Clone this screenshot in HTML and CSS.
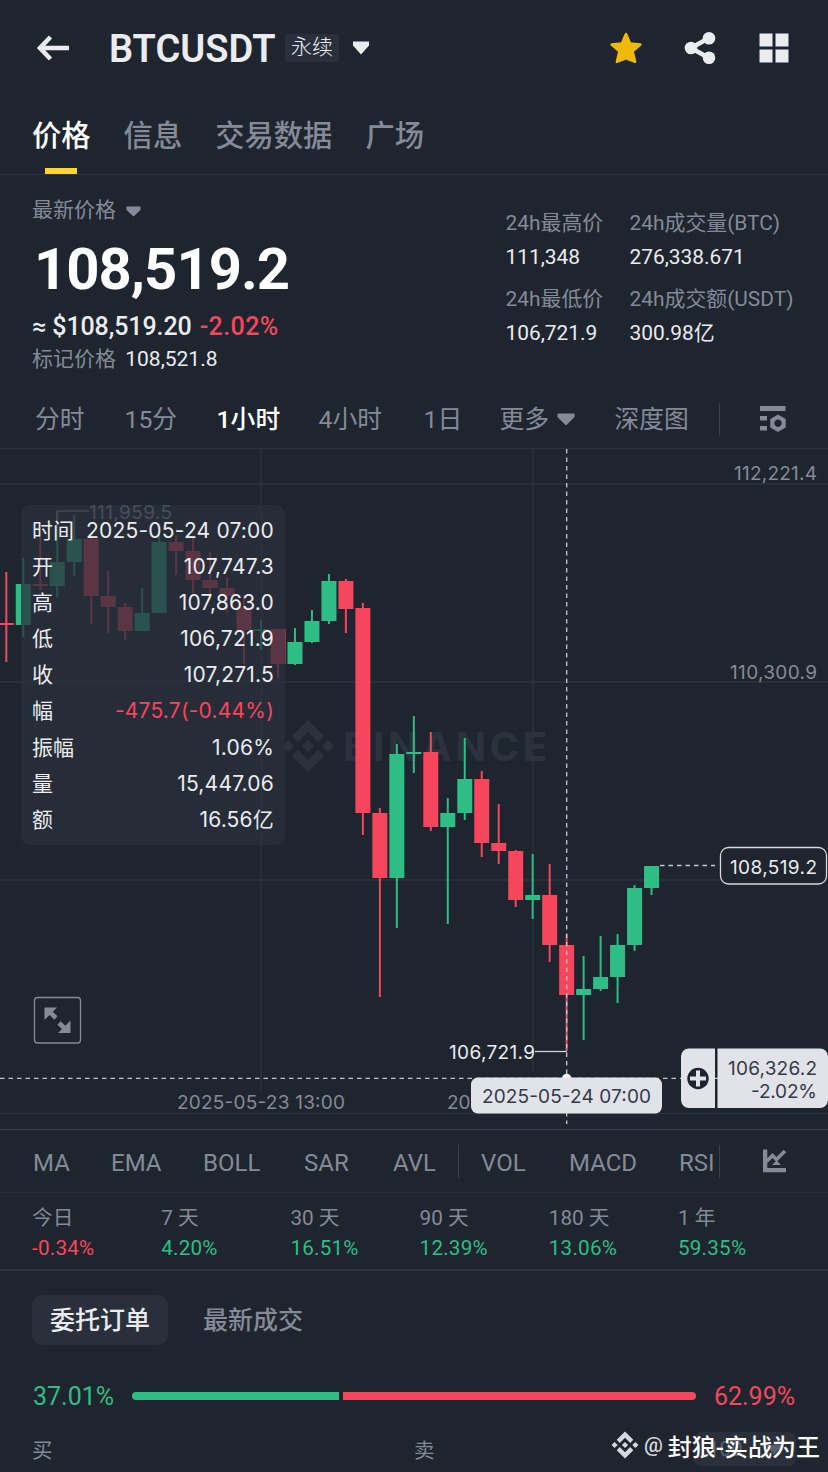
FILE: index.html
```html
<!DOCTYPE html>
<html lang="zh-CN">
<head>
  <meta charset="UTF-8">
  <title>BTCUSDT 永续</title>
  <link rel="stylesheet" href="styles.css">
</head>
<body>
  <header class="header">
    <svg class="back" width="34" height="28" viewBox="0 0 34 28"><path d="M33 14H5M14.500 3L4 14l10.500 11" fill="none" stroke="#eaecef" stroke-width="4.600"/></svg>
    <h1>BTCUSDT</h1>
    <span class="badge">永续</span>
    <svg class="caret" width="18" height="14" viewBox="0 0 18 14"><path d="M1 .5h16v4L9 13.500 1 4.500z" fill="#eaecef"/></svg>
    <div class="actions">
      <svg width="34" height="34" viewBox="0 0 34 34"><path d="M17 3l4.100 9.600 10.300.9-7.800 6.900 2.500 10.500L17 27.400l-9.100 3.500 2.500-10.500L2.600 13.500l10.300-.9z" fill="#f0b90b" stroke="#f0b90b" stroke-width="2.500" stroke-linejoin="round"/></svg>
      <svg width="34" height="34" viewBox="0 0 34 34"><path d="M26 7L8 17l18 10" fill="none" stroke="#eaecef" stroke-width="4.500"/><g fill="#eaecef"><circle cx="8" cy="17" r="6.300"/><circle cx="26" cy="7.300" r="6.300"/><circle cx="26" cy="26.700" r="6.300"/></g></svg>
      <svg width="34" height="34" viewBox="0 0 34 34"><path d="M2.500 2.500h13v13h-13zM18.500 2.500h13v13h-13zM2.500 18.500h13v13h-13zM18.500 18.500h13v13h-13z" fill="#eaecef"/></svg>
    </div>
  </header>

  <nav class="tabs">
    <span class="tab active">价格</span>
    <span class="tab">信息</span>
    <span class="tab">交易数据</span>
    <span class="tab">广场</span>
  </nav>

  <section class="ticker">
    <div class="ticker-main">
      <div class="label">最新价格 <svg width="15" height="11" viewBox="0 0 15 11"><path d="M.5.500h14v3.500l-7 6.500-7-6.500z" fill="#848a97"/></svg></div>
      <div class="price">108,519.2</div>
      <div class="fiat">≈ $108,519.20 <span class="down">-2.02%</span></div>
      <div class="mark">标记价格 <b>108,521.8</b></div>
    </div>
    <div class="stats">
      <div class="stat"><span>24h最高价</span><b>111,348</b></div>
      <div class="stat"><span>24h成交量(BTC)</span><b>276,338.671</b></div>
      <div class="stat"><span>24h最低价</span><b>106,721.9</b></div>
      <div class="stat"><span>24h成交额(USDT)</span><b>300.98亿</b></div>
    </div>
  </section>

  <nav class="intervals">
    <span>分时</span>
    <span>15分</span>
    <span class="active">1小时</span>
    <span>4小时</span>
    <span>1日</span>
    <span class="more">更多 <svg width="18" height="13" viewBox="0 0 18 13"><path d="M.5.500h17v3.500L9 12.500.5 4z" fill="#848a97"/></svg></span>
    <span>深度图</span>
    <i class="sep"></i>
    <svg width="28" height="28" viewBox="0 0 28 28"><path d="M1 1h25.500v5H1zM1 11h7v4.500H1zM1 21h7v4.500H1z" fill="#848a97"/><path d="M19 9.500l7.700 4.400v8.700L19 27l-7.700-4.400v-8.700zM19 14.500a3.700 3.700 0 1 0 .01 0z" fill="#848a97" fill-rule="evenodd"/></svg>
  </nav>

  <section class="chart">
    <svg id="chart" width="828" height="681" viewBox="0 448 828 681">
      <g class="grid">
        <path d="M0 448.500H828M0 484H828M0 682H828M0 880H828M0 1113.500H828M261 448V1090M532.800 448V1072"/>
      </g>
      <g class="watermark">
        <g transform="translate(308 746)">
          <path id="logo" d="M0-26L16-10 10-4 0-14-10-4-16-10zM0 26L16 10 10 4 0 14-10 4-16 10zM0-6L6 0 0 6-6 0zM20-6L26 0 20 6 14 0zM-20-6L-14 0-20 6-26 0z"/>
        </g>
        <text x="343" y="760.500" textLength="204" font-size="40">BINANCE</text>
      </g>
      <g id="candles"></g>
      <g class="axis" text-anchor="end">
        <text x="817" y="480" textLength="83">112,221.4</text>
        <text x="817" y="678.500" textLength="87">110,300.9</text>
      </g>
      <g class="axis">
        <text x="177" y="1109" textLength="168">2025-05-23 13:00</text>
        <text x="447" y="1109">20</text>
      </g>
      <path d="M57 530V511H89" fill="none" stroke="#848a97" stroke-width="1.500"/>
      <text class="extreme high" x="89" y="518.500" textLength="83">111,959.5</text>
      <text class="extreme" x="449" y="1059" textLength="86">106,721.9</text>
      <path d="M535 1051.500H567" stroke="#d0d3d9" stroke-width="1.300"/>
      <g class="cross">
        <path d="M566.700 449V1124M0 1078.300H828M660 865.500H715"/>
      </g>
      <circle cx="566.700" cy="1078.500" r="4.700" fill="#fff"/>
      <rect x="720.500" y="847.500" width="106" height="36.500" rx="8" fill="#1e252f" stroke="#d5d8de" stroke-width="1.300"/>
      <text class="extreme" x="730" y="873.500" textLength="87">108,519.2</text>
      <g fill="#e1e3e9">
        <rect x="471" y="1077.500" width="191" height="36" rx="7"/>
        <path d="M689 1048.500h26v59.500h-26a8 8 0 0 1-8-8v-43.500a8 8 0 0 1 8-8zM717.500 1048.500h102.500a8 8 0 0 1 8 8v43.500a8 8 0 0 1-8 8h-102.500z"/>
      </g>
      <circle cx="698" cy="1078.500" r="10.700" fill="#1e252f"/>
      <path d="M698 1070.500v16M690 1078.500h16" stroke="#e1e3e9" stroke-width="4"/>
      <g class="tag">
        <text x="482" y="1102.500" textLength="169">2025-05-24 07:00</text>
        <text x="728" y="1074.500" textLength="89">106,326.2</text>
        <text x="751" y="1098" textLength="66">-2.02%</text>
      </g>
      <g stroke="#848a97" fill="none">
        <rect x="34.500" y="997.500" width="46" height="45.500" rx="3" stroke-width="1.300"/>
        <path d="M48 1010.500l8 7.500M59 1023l8 7.500" stroke-width="4.500"/>
      </g>
      <path d="M44.500 1007.500h12.500l-12.500 12.500zM70.500 1033H58l12.500-12.500z" fill="#848a97"/>
    </svg>

    <div class="tooltip">
      <div><span>时间</span><b>2025-05-24 07:00</b></div>
      <div><span>开</span><b>107,747.3</b></div>
      <div><span>高</span><b>107,863.0</b></div>
      <div><span>低</span><b>106,721.9</b></div>
      <div><span>收</span><b>107,271.5</b></div>
      <div><span>幅</span><b class="down">-475.7(-0.44%)</b></div>
      <div><span>振幅</span><b>1.06%</b></div>
      <div><span>量</span><b>15,447.06</b></div>
      <div><span>额</span><b>16.56亿</b></div>
    </div>
  </section>

  <nav class="indicators">
    <span>MA</span>
    <span>EMA</span>
    <span>BOLL</span>
    <span>SAR</span>
    <span>AVL</span>
    <i class="sep"></i>
    <span>VOL</span>
    <span>MACD</span>
    <span>RSI</span>
    <i class="sep"></i>
    <svg width="26" height="26" viewBox="0 0 26 26"><path d="M1 1.500h4.300v18.500h18.700v4.300H1z" fill="#848a97"/><path d="M4.500 13.500l6-6 4 4L23 3" fill="none" stroke="#848a97" stroke-width="3.600"/><path d="M14.500 12.500l4.500 4.500h-9z" fill="#848a97"/></svg>
  </nav>

  <section class="returns">
    <div><span>今日</span><b class="down">-0.34%</b></div>
    <div><span>7 天</span><b>4.20%</b></div>
    <div><span>30 天</span><b>16.51%</b></div>
    <div><span>90 天</span><b>12.39%</b></div>
    <div><span>180 天</span><b>13.06%</b></div>
    <div><span>1 年</span><b>59.35%</b></div>
  </section>

  <section class="orders">
    <div class="order-tabs">
      <span class="active">委托订单</span>
      <span>最新成交</span>
    </div>
    <div class="ratio">
      <span class="up">37.01%</span>
      <div class="bar"><i class="buy"></i><i class="sell"></i></div>
      <span class="down">62.99%</span>
    </div>
    <div class="book-head">
      <span>买</span>
      <span>卖</span>
      <div class="depth">100 <svg width="16" height="11" viewBox="0 0 16 11"><path d="M1 .5h14v3L8 10.500 1 3.500z" fill="#596070"/></svg></div>
    </div>
  </section>

  <div class="author">
    <svg width="28" height="28" viewBox="-27 -27 54 54"><use href="#logo"/></svg>
    <span class="at">@</span><span>封狼-实战为王</span>
  </div>

  <script>
    // [up, high, body top, body bottom, low]
    const candles = [
      [0, 572, 623, 625, 662], [1, 558, 584, 625, 637], [0, 537, 584, 586, 590],
      [1, 512, 562, 586, 597], [1, 515, 539, 562, 576], [0, 535, 539, 596, 624],
      [0, 571, 596, 607, 633], [0, 603, 607, 631, 640], [1, 588, 613, 631, 631],
      [1, 535, 542, 613, 613], [0, 535, 542, 551, 575], [0, 538, 551, 580, 593],
      [0, 552, 580, 588, 597], [0, 577, 588, 596, 613], [0, 595, 607, 630, 664],
      [1, 620, 629, 631, 650], [0, 629, 629, 664, 678], [1, 628, 642, 664, 665],
      [1, 610, 621, 642, 643], [1, 574, 581, 621, 624], [0, 579, 581, 609, 633],
      [0, 603, 608, 813, 835], [0, 808, 813, 878, 997], [1, 744, 754, 878, 928],
      [1, 716, 752, 754, 773], [0, 732, 752, 827, 831], [1, 798, 813, 827, 924],
      [1, 738, 779, 813, 820], [0, 771, 779, 843, 857], [0, 804, 843, 851, 864],
      [0, 850, 851, 900, 907], [1, 854, 895, 900, 919], [0, 864, 895, 945, 962],
      [0, 934, 945, 995, 1051], [1, 956, 989, 995, 1040], [1, 936, 977, 989, 991],
      [1, 934, 945, 977, 1003], [1, 885, 888, 945, 951], [1, 866, 866, 888, 895]
    ];
    let shapes = "";
    candles.forEach(([up, high, top, bottom, low], i) => {
      const x = 6.3 + i * 16.98;
      const color = up ? "#2ebd85" : "#f6465d";
      shapes += `<path d="M${x} ${high}V${low}" stroke="${color}" stroke-width="2"/>`;
      shapes += `<rect x="${x - 7.5}" y="${top}" width="15" height="${bottom - top}" fill="${color}"/>`;
    });
    document.getElementById("candles").innerHTML = shapes;
  </script>
</body>
</html>
```

FILE: styles.css
```css
* {
  box-sizing: border-box;
}
body {
  margin: 0;
  width: 828px;
  height: 1472px;
  overflow: hidden;
  position: relative;
  background: #1e252f;
  color: #eaecef;
  font-family: Roboto, "Noto Sans CJK SC", sans-serif;
}
b {
  font-weight: 400;
}
svg {
  flex: none;
}
.up {
  color: #2ebd85;
}
.down {
  color: #f6465d;
}
.header {
  display: flex;
  align-items: center;
  height: 95px;
  padding: 0 37px 0 36px;
}
h1 {
  margin: 2px 0 0 39px;
  width: 176px;
  font-size: 38px;
  line-height: 44px;
  font-weight: 600;
}
.badge {
  width: 54px;
  height: 28px;
  border-radius: 4px;
  background: #29303c;
  font-size: 21px;
  font-weight: 300;
  line-height: 27px;
  text-align: center;
}
.caret {
  margin-left: 13px;
}
.actions {
  display: flex;
  gap: 40px;
  margin-left: auto;
}
.tabs {
  display: flex;
  gap: 33px;
  height: 80px;
  padding-left: 32px;
  border-bottom: 1px solid #2d343f;
  font-size: 29.3px;
  font-weight: 500;
  line-height: 82px;
  color: #848a97;
}
.tab.active {
  display: flex;
  flex-direction: column;
  align-items: center;
  color: #fff;
}
.tab.active::after {
  content: "";
  width: 32px;
  height: 6px;
  margin-top: -9px;
  background: #fcd535;
}
.ticker {
  display: flex;
  height: 213px;
  padding-left: 32px;
}
.ticker-main {
  width: 473.500px;
  padding-top: 20px;
}
.label,
.mark {
  font-size: 21px;
  line-height: 30px;
  color: #848a97;
}
.label svg {
  margin-left: 5px;
}
.price {
  margin: 9px 0 8px 2px;
  font-size: 58px;
  font-weight: 700;
  line-height: 70px;
  letter-spacing: -1px;
  color: #fff;
}
.fiat {
  font-size: 25px;
  font-weight: 500;
  line-height: 30px;
  letter-spacing: -0.1px;
}
.fiat .down {
  margin-left: 2px;
  letter-spacing: 0.4px;
}
.mark {
  margin-top: 2px;
}
.mark b {
  margin-left: 4px;
  color: #eaecef;
}
.stats {
  display: grid;
  grid-template-columns: 124px 170px;
  grid-auto-rows: 76px;
  padding-top: 31px;
}
.stat span,
.stat b {
  display: block;
  font-size: 20.9px;
  line-height: 34px;
  white-space: nowrap;
}
.stat span {
  color: #848a97;
}
.intervals {
  display: grid;
  grid-template-columns: 89.500px 92px 102px 105px 76px 115px 104.500px 40px 28px;
  align-items: center;
  height: 60px;
  padding-left: 35px;
  font-size: 24.800px;
  line-height: 60px;
  color: #848a97;
}
.intervals span {
  padding-top: 2px;
}
.intervals .more svg {
  margin: 0 0 2px 2px;
}
.intervals .active {
  font-weight: 500;
  color: #fff;
}
.sep {
  width: 1px;
  height: 33px;
  background: #39404c;
}
.chart {
  position: relative;
  height: 682px;
  border-bottom: 1.500px solid #39404c;
}
.chart > svg {
  display: block;
}
.grid {
  stroke: #2c333e;
  stroke-width: 1.300;
}
.watermark {
  fill: #2b323d;
  font-family: Inter, sans-serif;
  font-weight: 700;
}
.axis,
.extreme,
.tag {
  font-family: Inter, sans-serif;
  font-size: 19px;
}
.axis {
  fill: #848a97;
}
.extreme {
  fill: #eaecef;
}
.extreme.high {
  fill: #a2a7b1;
}
.tag {
  fill: #333a46;
}
.cross {
  fill: none;
  stroke: #c4c8cf;
  stroke-width: 1.300;
  stroke-dasharray: 4.500 4;
}
.tooltip {
  position: absolute;
  left: 21px;
  top: 57px;
  width: 264px;
  height: 340px;
  padding: 8px 11px;
  border-radius: 9px;
  background: rgba(41, 48, 60, 0.76);
  font-family: Inter, "Noto Sans CJK SC", sans-serif;
  font-size: 21px;
}
.tooltip div {
  display: flex;
  justify-content: space-between;
  height: 36.100px;
  line-height: 36px;
}
.tooltip b {
  letter-spacing: 0.2px;
}
.indicators {
  display: grid;
  grid-template-columns: 78px 92px 101px 89px 65px 23px 88px 110px 40px 43px 26px;
  align-items: center;
  height: 63px;
  padding-left: 33px;
  border-bottom: 1px solid #2a313c;
  font-size: 24px;
  color: #848a97;
}
.indicators span {
  padding-top: 3px;
}
.returns {
  display: grid;
  grid-template-columns: repeat(6, 129.200px);
  height: 78px;
  padding: 10px 0 0 32px;
  border-bottom: 2px solid #2d343f;
  font-size: 20.700px;
  line-height: 30px;
}
.returns span,
.returns b {
  display: block;
}
.returns span {
  color: #848a97;
}
.returns b {
  color: #2ebd85;
  letter-spacing: 0.2px;
}
.returns .down {
  color: #f6465d;
}
.orders {
  padding: 24px 32px 0;
}
.order-tabs {
  display: flex;
  gap: 17px;
  font-size: 25px;
  font-weight: 500;
  line-height: 52px;
  color: #848a97;
}
.order-tabs span {
  height: 50px;
  padding: 0 18px;
  border-radius: 10px;
}
.order-tabs .active {
  background: #29303c;
  color: #eaecef;
}
.ratio {
  display: flex;
  align-items: center;
  justify-content: space-between;
  height: 30px;
  margin-top: 36px;
  padding: 0 1px;
  font-size: 25px;
}
.bar {
  display: flex;
  gap: 4px;
  width: 564px;
  height: 8px;
}
.buy {
  flex: 37;
  border-radius: 4px 0 0 4px;
  background: #2ebd85;
}
.sell {
  flex: 63;
  border-radius: 0 4px 4px 0;
  background: #f6465d;
}
.book-head {
  display: grid;
  grid-template-columns: 382px 1fr 102px;
  align-items: center;
  height: 34px;
  margin-top: 21px;
  font-size: 20.500px;
  color: #848a97;
}
.depth {
  display: flex;
  align-items: center;
  justify-content: space-between;
  height: 34px;
  padding: 0 14px;
  border-radius: 7px;
  background: #29303c;
  color: #596070;
}
.author {
  position: absolute;
  left: 611px;
  top: 1429px;
  display: flex;
  align-items: center;
  height: 32px;
  font-size: 24px;
  font-weight: 500;
  white-space: nowrap;
  color: #fff;
}
.author svg {
  fill: #d6d8dd;
}
.at {
  margin: 0 5px;
  font-size: 21px;
  color: #d6d8dd;
}
```
